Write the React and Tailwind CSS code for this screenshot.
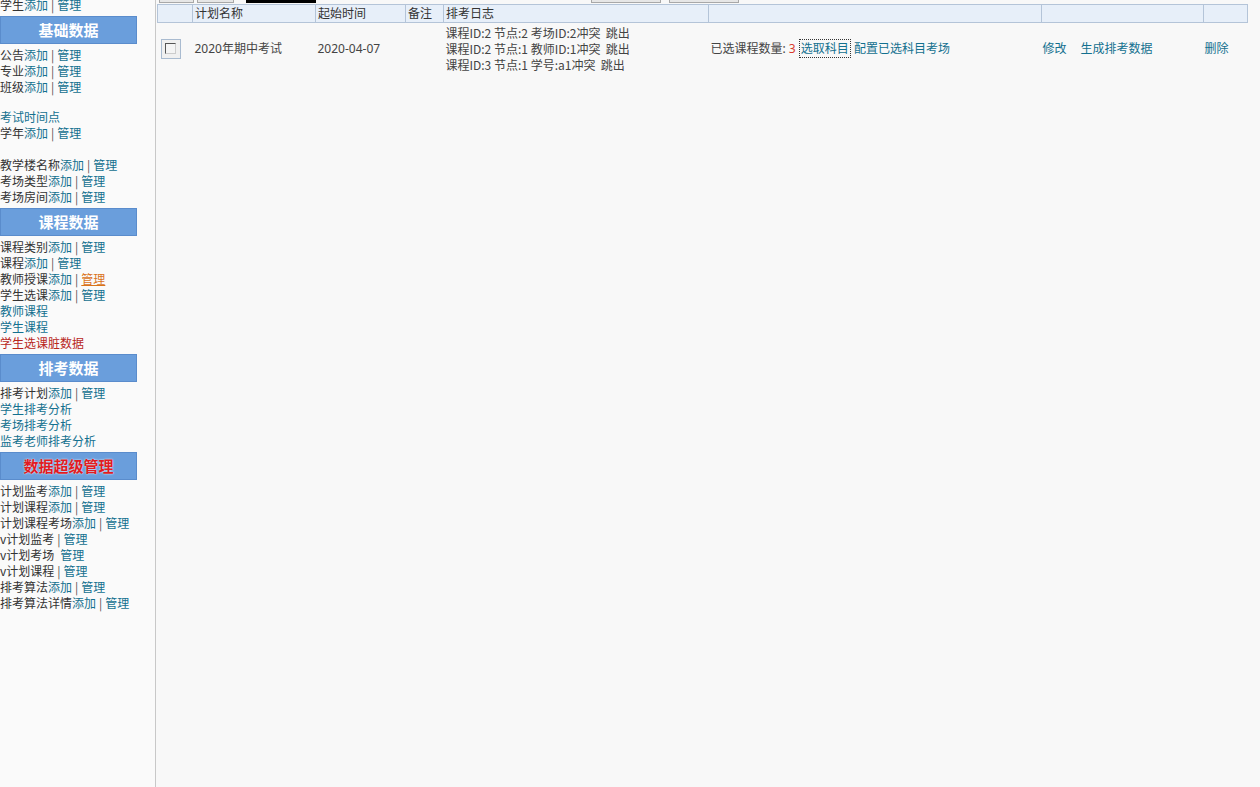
import React from "react";

const F = { fontFamily: '"Noto Sans", "Noto Sans CJK SC", sans-serif' };

const L = ({ children, cls = "" }) => (
  <span className={"text-[#13708f] " + cls}>{children}</span>
);
const Sep = () => <span className="text-[#555] mx-[3px]">|</span>;

const Line = ({ label, add = true, mgr = true, hot = false, sepOnly = false }) => (
  <div className="h-4 leading-4 whitespace-nowrap text-[#333]">
    {label}
    {add && <L>添加</L>}
    {sepOnly && <span className="inline-block w-[6px]" />}
    {mgr && (
      <>
        {!sepOnly && <Sep />}
        {hot ? (
          <span className="text-[#d9731a] underline">管理</span>
        ) : (
          <L>管理</L>
        )}
      </>
    )}
  </div>
);

const Head = ({ children, red = false }) => (
  <div
    className={
      "w-[137px] h-[28px] my-[3px] bg-[#6a9edc] border border-[#5a8ccc] flex items-center justify-center font-bold text-[15px] " +
      (red ? "text-[#e11b22] [text-shadow:0_0_2px_#fff]" : "text-white")
    }
  >
    {children}
  </div>
);

export default function App() {
  return (
    <div className="flex h-screen bg-[#f8f8f8] text-[12px] overflow-hidden" style={F}>
      {/* sidebar */}
      <div className="w-[156px] shrink-0 border-r border-[#c8c8c8] bg-[#fafafa]">
        <div className="-mt-[3px]" style={{ fontFamily: '"Noto Sans CJK SC", sans-serif' }}>
          <Line label="学生" />
          <Head>基础数据</Head>
          <Line label="公告" />
          <Line label="专业" />
          <Line label="班级" />
          <div className="h-[14px]" />
          <div className="h-4 leading-4"><L>考试时间点</L></div>
          <Line label="学年" />
          <div className="h-4" />
          <Line label="教学楼名称" />
          <Line label="考场类型" />
          <Line label="考场房间" />
          <Head>课程数据</Head>
          <Line label="课程类别" />
          <Line label="课程" />
          <Line label="教师授课" hot />
          <Line label="学生选课" />
          <div className="h-4 leading-4"><L>教师课程</L></div>
          <div className="h-4 leading-4"><L>学生课程</L></div>
          <div className="h-4 leading-4 text-[#b8261c]">学生选课脏数据</div>
          <Head>排考数据</Head>
          <Line label="排考计划" />
          <div className="h-4 leading-4"><L>学生排考分析</L></div>
          <div className="h-4 leading-4"><L>考场排考分析</L></div>
          <div className="h-4 leading-4"><L>监考老师排考分析</L></div>
          <Head red>数据超级管理</Head>
          <Line label="计划监考" />
          <Line label="计划课程" />
          <Line label="计划课程考场" />
          <Line label="v计划监考" add={false} />
          <Line label="v计划考场" add={false} sepOnly />
          <Line label="v计划课程" add={false} />
          <Line label="排考算法" />
          <Line label="排考算法详情" />
        </div>
      </div>

      {/* main */}
      <div className="flex-1 pl-[1px] pr-[13px]">
        {/* toolbar slivers */}
        <div className="flex h-[3px] items-end">
          <div className="ml-[2px] w-[35px] h-[3px] bg-[#e6e6e6] border-b border-x border-[#a8a8a8]" />
          <div className="ml-[3px] w-[37px] h-[3px] bg-[#e6e6e6] border-b border-x border-[#a8a8a8]" />
          <div className="ml-[12px] w-[70px] h-[3px] bg-black" />
          <div className="ml-[275px] w-[70px] h-[3px] bg-[#e6e6e6] border-b border-x border-[#a8a8a8]" />
          <div className="ml-[8px] w-[70px] h-[3px] bg-[#e6e6e6] border-b border-x border-[#a8a8a8]" />
        </div>
        <table className="mt-[1px] w-[1090px] border-collapse table-fixed text-[#333]">
          <colgroup>
            <col className="w-[35px]" />
            <col className="w-[123px]" />
            <col className="w-[90px]" />
            <col className="w-[38px]" />
            <col className="w-[265px]" />
            <col className="w-[333px]" />
            <col className="w-[162px]" />
            <col className="w-[44px]" />
          </colgroup>
          <thead>
            <tr className="h-[18px] bg-[#e7eff9]">
              {["", "计划名称", "起始时间", "备注", "排考日志", "", "", ""].map((h, i) => (
                <th
                  key={i}
                  className="border border-[#b4c4d8] text-left font-normal px-[2px] leading-[16px] whitespace-nowrap"
                >
                  {h}
                </th>
              ))}
            </tr>
          </thead>
          <tbody>
            <tr className="h-[52px] text-[#444]">
              <td className="pl-[3px] align-middle">
                <div className="w-[20px] h-[20px] border border-[#a9bbd0] bg-[#f0f0f0] flex items-center justify-center">
                  <div className="w-[11px] h-[11px] border border-[#555] border-r-[#ccc] border-b-[#ccc] bg-[#f4f4f4]" />
                </div>
              </td>
              <td className="px-[2px] whitespace-nowrap">2020年期中考试</td>
              <td className="px-[2px] whitespace-nowrap">2020-04-07</td>
              <td className="px-[2px]"></td>
              <td className="px-[2px] leading-4 whitespace-nowrap" style={{ fontFamily: '"Noto Sans CJK SC", sans-serif' }}>
                <div>课程ID:2 节点:2 考场ID:2冲突&nbsp; 跳出</div>
                <div>课程ID:2 节点:1 教师ID:1冲突&nbsp; 跳出</div>
                <div>课程ID:3 节点:1 学号:a1冲突&nbsp; 跳出</div>
              </td>
              <td className="px-[2px] whitespace-nowrap">
                已选课程数量:&nbsp;<span className="text-[#d9382c]">3</span>{" "}
                <span className="text-[#13708f] border border-dotted border-[#333] px-[1px]">选取科目</span>{" "}
                <span className="text-[#13708f]">配置已选科目考场</span>
              </td>
              <td className="px-[1px] whitespace-nowrap">
                <span className="text-[#13708f]">修改</span>
                <span className="text-[#13708f] ml-[14px]">生成排考数据</span>
              </td>
              <td className="px-[1px] whitespace-nowrap">
                <span className="text-[#13708f]">删除</span>
              </td>
            </tr>
          </tbody>
        </table>
      </div>
    </div>
  );
}
